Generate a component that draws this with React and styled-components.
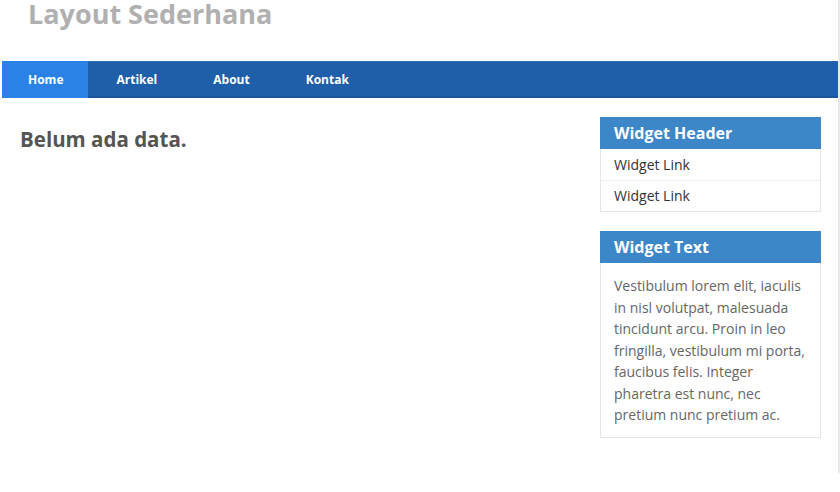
import React from "react";
import styled, { createGlobalStyle } from "styled-components";

const Global = createGlobalStyle`
  html, body { margin: 0; padding: 0; background: #fff; }
  body { font-family: "Open Sans", "Liberation Sans", sans-serif; }
  * { box-sizing: border-box; }
`;

const Page = styled.div`
  margin-left: 2px;
  width: 838px;
  border-right: 2px solid #e8e8e8;
  padding-bottom: 35px;
`;

const Header = styled.header`
  height: 61px;
  padding: 0 26px;
`;

const Title = styled.h1`
  margin: 0;
  font-size: 27px;
  line-height: 27px;
  font-weight: 700;
  color: #b0b0b0;
`;

const Nav = styled.nav`
  display: flex;
  height: 37px;
  background: #1f5ea8;
  border-top: 1px solid #2c6ab2;
  border-bottom: 2px solid #1a559c;
`;

const NavItem = styled.a`
  display: flex;
  align-items: center;
  padding-left: ${(p) => (p.$first ? "26px" : "28px")};
  padding-right: ${(p) => (p.$first ? "25px" : "28px")};
  margin-top: -1px;
  margin-bottom: -2px;
  color: #fff;
  font-size: 12px;
  font-weight: 700;
  text-decoration: none;
  background: ${(p) => (p.$active ? "#2b82e6" : "transparent")};
`;

const Body = styled.div`
  display: flex;
  justify-content: space-between;
  padding: 19px 17px 0 18px;
`;

const Main = styled.main`
  flex: 1;
`;

const Empty = styled.h2`
  margin: 8px 0 0;
  font-size: 20.5px;
  line-height: 28px;
  font-weight: 700;
  color: #555;
`;

const Sidebar = styled.aside`
  width: 221px;
  display: flex;
  flex-direction: column;
  gap: 19px;
`;

const Widget = styled.section`
  border: 1px solid #e6e6e6;
  border-top: none;
`;

const WidgetHead = styled.h3`
  margin: 0 -1px;
  height: 32px;
  padding: 0 14px;
  display: flex;
  align-items: center;
  background: #3d87c8;
  color: #fff;
  font-size: 16px;
  font-weight: 700;
`;

const WidgetLink = styled.a`
  display: block;
  height: 31px;
  line-height: 31px;
  padding: 0 13px;
  font-size: 14px;
  color: #333;
  text-decoration: none;
  & + & { border-top: 1px solid #eee; line-height: 30px; }
`;

const WidgetText = styled.p`
  margin: 0;
  padding: 12px 13px 11px;
  font-size: 14px;
  line-height: 21.5px;
  color: #666;
`;

export default function App() {
  const nav = ["Home", "Artikel", "About", "Kontak"];
  return (
    <>
      <Global />
      <Page>
        <Header>
          <Title>Layout Sederhana</Title>
        </Header>
        <Nav>
          {nav.map((n, i) => (
            <NavItem key={n} href="#" $active={i === 0} $first={i === 0}>
              {n}
            </NavItem>
          ))}
        </Nav>
        <Body>
          <Main>
            <Empty>Belum ada data.</Empty>
          </Main>
          <Sidebar>
            <Widget>
              <WidgetHead>Widget Header</WidgetHead>
              <WidgetLink href="#">Widget Link</WidgetLink>
              <WidgetLink href="#">Widget Link</WidgetLink>
            </Widget>
            <Widget>
              <WidgetHead>Widget Text</WidgetHead>
              <WidgetText>
                Vestibulum lorem elit, iaculis in nisl volutpat, malesuada
                tincidunt arcu. Proin in leo fringilla, vestibulum mi porta,
                faucibus felis. Integer pharetra est nunc, nec pretium nunc
                pretium ac.
              </WidgetText>
            </Widget>
          </Sidebar>
        </Body>
      </Page>
    </>
  );
}
